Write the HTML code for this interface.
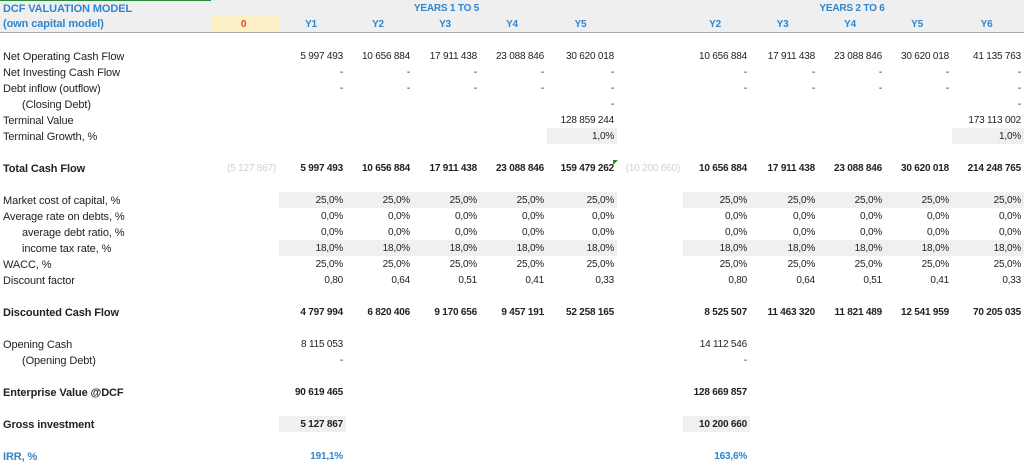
<!DOCTYPE html>
<html><head><meta charset="utf-8"><style>
body{margin:0;width:1024px;height:473px;overflow:hidden;background:#fff;font-family:"Liberation Sans",Arial,sans-serif;font-size:10px;color:#222;position:relative}
table{border-collapse:collapse;table-layout:fixed;width:1024px;position:absolute;top:0;left:0}
td{height:16px;padding:1px 3px 0 0;box-sizing:border-box;text-align:right;white-space:nowrap;overflow:visible;letter-spacing:-0.2px}
td.l{text-align:left;padding-left:3px;font-size:11px;letter-spacing:-0.1px}
td.i{padding-left:22px;text-align:left;font-size:11px;letter-spacing:-0.1px}
tr.h td{background:#efefef;color:#2e86cf;font-weight:bold}
tr.h2 td{border-bottom:1px solid #a9a9a9;text-align:center}
.b td{font-weight:bold}
.s{background:#f0f0f0}
.g{color:#d0d0d0;font-weight:normal!important}
.blue td{color:#2e86cf;font-weight:bold}
.top{position:absolute;left:0;top:0;width:211px;height:1px;background:#2a8a3c}
</style></head><body>
<table>
<colgroup><col style="width:211px"><col style="width:68px"><col style="width:67px"><col style="width:67px"><col style="width:67px"><col style="width:67px"><col style="width:70px"><col style="width:66px"><col style="width:67px"><col style="width:68px"><col style="width:67px"><col style="width:67px"><col style="width:72px"></colgroup>
<tr class="h"><td class="l">DCF VALUATION MODEL</td><td></td><td colspan="5" style="text-align:center">YEARS 1 TO 5</td><td></td><td colspan="5" style="text-align:center">YEARS 2 TO 6</td></tr>
<tr class="h h2"><td class="l" style="text-align:left">(own capital model)</td><td style="background:#fdefc6;color:#e8412c">0</td><td>Y1</td><td>Y2</td><td>Y3</td><td>Y4</td><td>Y5</td><td></td><td>Y2</td><td>Y3</td><td>Y4</td><td>Y5</td><td>Y6</td></tr>
<tr><td colspan="13"></td></tr>
<tr><td class="l">Net Operating Cash Flow</td><td></td><td>5 997 493</td><td>10 656 884</td><td>17 911 438</td><td>23 088 846</td><td>30 620 018</td><td></td><td>10 656 884</td><td>17 911 438</td><td>23 088 846</td><td>30 620 018</td><td>41 135 763</td></tr>
<tr><td class="l">Net Investing Cash Flow</td><td></td><td>-</td><td>-</td><td>-</td><td>-</td><td>-</td><td></td><td>-</td><td>-</td><td>-</td><td>-</td><td>-</td></tr>
<tr><td class="l">Debt inflow (outflow)</td><td></td><td>-</td><td>-</td><td>-</td><td>-</td><td>-</td><td></td><td>-</td><td>-</td><td>-</td><td>-</td><td>-</td></tr>
<tr><td class="i">(Closing Debt)</td><td></td><td></td><td></td><td></td><td></td><td>-</td><td></td><td></td><td></td><td></td><td></td><td>-</td></tr>
<tr><td class="l">Terminal Value</td><td></td><td></td><td></td><td></td><td></td><td>128 859 244</td><td></td><td></td><td></td><td></td><td></td><td>173 113 002</td></tr>
<tr><td class="l">Terminal Growth, %</td><td></td><td></td><td></td><td></td><td></td><td class="s">1,0%</td><td></td><td></td><td></td><td></td><td></td><td class="s">1,0%</td></tr>
<tr><td colspan="13"></td></tr>
<tr class="b"><td class="l">Total Cash Flow</td><td class="g">(5 127 867)</td><td>5 997 493</td><td>10 656 884</td><td>17 911 438</td><td>23 088 846</td><td style="position:relative">159 479 262<span style="position:absolute;right:-1px;top:0;width:0;height:0;border-top:5px solid #1e8a2e;border-right:5px solid transparent"></span></td><td class="g">(10 200 660)</td><td>10 656 884</td><td>17 911 438</td><td>23 088 846</td><td>30 620 018</td><td>214 248 765</td></tr>
<tr><td colspan="13"></td></tr>
<tr><td class="l">Market cost of capital, %</td><td></td><td class="s">25,0%</td><td class="s">25,0%</td><td class="s">25,0%</td><td class="s">25,0%</td><td class="s">25,0%</td><td></td><td class="s">25,0%</td><td class="s">25,0%</td><td class="s">25,0%</td><td class="s">25,0%</td><td class="s">25,0%</td></tr>
<tr><td class="l">Average rate on debts, %</td><td></td><td>0,0%</td><td>0,0%</td><td>0,0%</td><td>0,0%</td><td>0,0%</td><td></td><td>0,0%</td><td>0,0%</td><td>0,0%</td><td>0,0%</td><td>0,0%</td></tr>
<tr><td class="i">average debt ratio, %</td><td></td><td>0,0%</td><td>0,0%</td><td>0,0%</td><td>0,0%</td><td>0,0%</td><td></td><td>0,0%</td><td>0,0%</td><td>0,0%</td><td>0,0%</td><td>0,0%</td></tr>
<tr><td class="i">income tax rate, %</td><td></td><td class="s">18,0%</td><td class="s">18,0%</td><td class="s">18,0%</td><td class="s">18,0%</td><td class="s">18,0%</td><td></td><td class="s">18,0%</td><td class="s">18,0%</td><td class="s">18,0%</td><td class="s">18,0%</td><td class="s">18,0%</td></tr>
<tr><td class="l">WACC, %</td><td></td><td>25,0%</td><td>25,0%</td><td>25,0%</td><td>25,0%</td><td>25,0%</td><td></td><td>25,0%</td><td>25,0%</td><td>25,0%</td><td>25,0%</td><td>25,0%</td></tr>
<tr><td class="l">Discount factor</td><td></td><td>0,80</td><td>0,64</td><td>0,51</td><td>0,41</td><td>0,33</td><td></td><td>0,80</td><td>0,64</td><td>0,51</td><td>0,41</td><td>0,33</td></tr>
<tr><td colspan="13"></td></tr>
<tr class="b"><td class="l">Discounted Cash Flow</td><td></td><td>4 797 994</td><td>6 820 406</td><td>9 170 656</td><td>9 457 191</td><td>52 258 165</td><td></td><td>8 525 507</td><td>11 463 320</td><td>11 821 489</td><td>12 541 959</td><td>70 205 035</td></tr>
<tr><td colspan="13"></td></tr>
<tr><td class="l">Opening Cash</td><td></td><td>8 115 053</td><td colspan="5"></td><td>14 112 546</td><td colspan="4"></td></tr>
<tr><td class="i">(Opening Debt)</td><td></td><td>-</td><td colspan="5"></td><td>-</td><td colspan="4"></td></tr>
<tr><td colspan="13"></td></tr>
<tr class="b"><td class="l">Enterprise Value @DCF</td><td></td><td>90 619 465</td><td colspan="5"></td><td>128 669 857</td><td colspan="4"></td></tr>
<tr><td colspan="13"></td></tr>
<tr class="b"><td class="l">Gross investment</td><td></td><td class="s">5 127 867</td><td colspan="5"></td><td class="s">10 200 660</td><td colspan="4"></td></tr>
<tr><td colspan="13"></td></tr>
<tr class="blue"><td class="l">IRR, %</td><td></td><td>191,1%</td><td colspan="5"></td><td>163,6%</td><td colspan="4"></td></tr>
</table>
<div class="top"></div>
</body></html>
